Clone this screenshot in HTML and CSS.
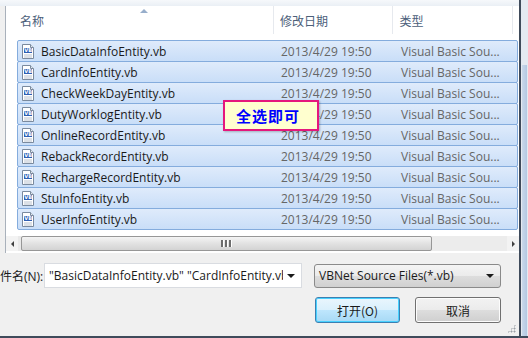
FILE: index.html
```html
<!DOCTYPE html>
<html lang="zh-CN">
<head>
    <meta charset="UTF-8">
    <title>打开</title>
    <link rel="stylesheet" href="styles.css">
</head>
<body>
    <div class="dialog">
        <div class="topstrip"></div>
        <div class="listpane">
            <div class="header">
                <div class="col col-name">名称</div>
                <div class="col col-date">修改日期</div>
                <div class="col col-type">类型</div>
                <div class="col col-rest"></div>
                <span class="sort-arrow"></span>
            </div>

            <div class="rows" id="rows"></div>

            <div class="hscroll">
                <div class="arrow-btn"><span class="tri-left"></span></div>
                <div class="thumb"><span class="grip"><i></i><i></i><i></i></span></div>
                <div class="track"></div>
                <div class="arrow-btn"><span class="tri-right"></span></div>
            </div>

            <div class="tooltip">全选即可</div>
        </div>

        <div class="bottom">
            <div class="line">
                <span class="label">文件名(N):</span>
                <div class="filename">
                    <span class="filename-text">"BasicDataInfoEntity.vb" "CardInfoEntity.vb"</span>
                    <span class="drop"></span>
                </div>
                <div class="combo">
                    <span>VBNet Source Files(*.vb)</span>
                    <span class="drop"></span>
                </div>
            </div>
            <div class="line buttons">
                <button class="btn btn-default">打开(O)</button>
                <button class="btn">取消</button>
            </div>
            <div class="grip-corner"></div>
        </div>
    </div>
    <div class="side"><div class="vthumb"></div></div>

    <script>
        const files = [
            'BasicDataInfoEntity.vb',
            'CardInfoEntity.vb',
            'CheckWeekDayEntity.vb',
            'DutyWorklogEntity.vb',
            'OnlineRecordEntity.vb',
            'RebackRecordEntity.vb',
            'RechargeRecordEntity.vb',
            'StuInfoEntity.vb',
            'UserInfoEntity.vb'
        ];

        const icon = `<svg class="icon" width="12" height="15" viewBox="0 0 12 15">
            <path d="M0.5 0.5 H8.5 L11.5 3.5 V14.5 H0.5 Z" fill="#fff" stroke="#7a8a9e"/>
            <path d="M8.5 0.5 V3.5 H11.5" fill="#e4e9ef" stroke="#7a8a9e"/>
            <rect x="2" y="4" width="8" height="5" fill="#2f5fb3"/>
            <text x="2.3" y="8.4" font-size="5" font-family="DejaVu Sans" font-weight="bold" fill="#fff">VB</text>
            <line x1="2" y1="11" x2="10" y2="11" stroke="#b8c2cf"/>
            <line x1="2" y1="13" x2="10" y2="13" stroke="#b8c2cf"/>
        </svg>`;

        const rows = document.getElementById('rows');
        files.forEach(name => {
            let row = document.createElement('div');
            row.className = 'row';
            row.innerHTML = `<div class="cell cell-name">${icon}<span>${name}</span></div>` +
                `<div class="cell cell-date">2013/4/29 19:50</div>` +
                `<div class="cell cell-type">Visual Basic Sou...</div>`;
            rows.appendChild(row);
        });
    </script>
</body>
</html>
```

FILE: styles.css
```css
body {
    margin: 0;
    width: 528px;
    height: 338px;
    overflow: hidden;
    display: flex;
    background: #f0f0f0;
    font-family: "Open Sans", "Noto Sans CJK SC", sans-serif;
    font-size: 12px;
}
.dialog {
    width: 519px;
    height: 336px;
    border-right: 2px solid #3f4b5b;
    border-bottom: 2px solid #3f4b5b;
    background: #f0f0f0;
    display: flex;
    flex-direction: column;
}
.side {
    flex: 1;
    display: flex;
    flex-direction: column;
    background: #e4eaf1;
    border-bottom: 2px solid #3f4b5b;
}
.vthumb {
    margin-top: 65px;
    flex: 1;
    margin-left: 1px;
    margin-right: 1px;
    background: linear-gradient(to right, #c9d8ea, #b3c8e2);
}
.topstrip {
    height: 6px;
    background: linear-gradient(#f6f8fb, #eaeff5);
}
.listpane {
    position: relative;
    height: 247px;
    margin-left: 5px;
    border-left: 1px solid #a9b1bb;
    background: #fff;
    display: flex;
    flex-direction: column;
}
.header {
    position: relative;
    height: 28px;
    display: flex;
    color: #4c607a;
    font-family: "Noto Sans CJK SC", sans-serif;
}
.col {
    display: flex;
    align-items: center;
    padding-left: 6px;
    padding-top: 1px;
    border-right: 1px solid #e6e9ee;
    box-sizing: border-box;
}
.col-name { width: 269px; padding-left: 14px; }
.col-date { width: 120px; }
.col-type { width: 120px; }
.col-rest { flex: 1; border-right: none; }
.sort-arrow {
    position: absolute;
    left: 134px;
    top: 3px;
    border-left: 4px solid transparent;
    border-right: 4px solid transparent;
    border-bottom: 4px solid #97aecb;
}
.rows {
    padding: 6px 1px 0 11px;
    display: flex;
    flex-direction: column;
}
.row {
    height: 22px;
    box-sizing: border-box;
    border: 1px solid #84acdd;
    border-radius: 2px;
    background: linear-gradient(#dfebfb, #c9def8);
    display: flex;
    align-items: center;
}
.row + .row {
    margin-top: -1px;
}
.cell {
    white-space: nowrap;
    color: #666;
}
.cell-name {
    width: 253px;
    display: flex;
    align-items: center;
    gap: 7px;
    padding-left: 4px;
    color: #1a1a1a;
}
.cell-date {
    width: 114px;
    padding-left: 6px;
}
.cell-type {
    padding-left: 6px;
}
.icon {
    display: block;
}
.hscroll {
    margin-top: 6px;
    height: 15px;
    display: flex;
    background: #e9e9e9;
}
.arrow-btn {
    width: 12px;
    display: flex;
    align-items: center;
    justify-content: center;
    background: #f3f3f3;
}
.tri-left {
    border-top: 3px solid transparent;
    border-bottom: 3px solid transparent;
    border-right: 3px solid #404040;
}
.tri-right {
    border-top: 3px solid transparent;
    border-bottom: 3px solid transparent;
    border-left: 3px solid #404040;
}
.thumb {
    width: 411px;
    margin-left: 3px;
    box-sizing: border-box;
    border: 1px solid #979797;
    border-radius: 2px;
    background: linear-gradient(#f4f4f4, #e2e2e2 50%, #d3d3d3);
    display: flex;
    align-items: center;
    justify-content: center;
}
.grip {
    display: flex;
    gap: 1px;
}
.grip i {
    width: 2px;
    height: 7px;
    background: #6d6d6d;
    border-right: 1px solid #fff;
}
.track {
    flex: 1;
    background: #ececec;
}
.tooltip {
    position: absolute;
    left: 217px;
    top: 94px;
    width: 96px;
    height: 31px;
    box-sizing: border-box;
    border: 2px solid #e5177d;
    background: #ffffcf;
    box-shadow: 1px 1px 2px rgba(0, 0, 0, 0.25);
    padding-left: 11px;
    display: flex;
    align-items: center;
    color: #0000ff;
    font-family: "Noto Sans CJK SC", sans-serif;
    font-weight: bold;
    font-size: 15px;
    letter-spacing: 1px;
}
.bottom {
    flex: 1;
    position: relative;
    display: flex;
    flex-direction: column;
}
.line {
    display: flex;
    align-items: center;
    margin-top: 10px;
}
.label {
    margin-left: -12px;
    width: 56px;
    color: #1a1a1a;
}
.filename {
    width: 258px;
    height: 25px;
    box-sizing: border-box;
    border: 1px solid #d9dce1;
    background: #fff;
    display: flex;
    align-items: center;
    padding-left: 4px;
    overflow: hidden;
}
.filename-text {
    width: 234px;
    overflow: hidden;
    white-space: nowrap;
    color: #1a1a1a;
}
.drop {
    margin-left: auto;
    margin-right: 6px;
    border-left: 4px solid transparent;
    border-right: 4px solid transparent;
    border-top: 4px solid #1a1a1a;
}
.combo {
    margin-left: 12px;
    width: 187px;
    height: 24px;
    box-sizing: border-box;
    border: 1px solid #8a8a8a;
    border-radius: 3px;
    background: linear-gradient(#f4f4f4, #ebebeb 50%, #dddddd 51%, #d0d0d0);
    display: flex;
    align-items: center;
    padding-left: 4px;
    color: #1a1a1a;
}
.buttons {
    margin-top: 9px;
    margin-left: 315px;
    gap: 15px;
}
.btn {
    width: 86px;
    height: 26px;
    border: 1px solid #707070;
    border-radius: 3px;
    background: linear-gradient(#f2f2f2, #ebebeb 50%, #dddddd 51%, #cfcfcf);
    font-family: "Noto Sans CJK SC", sans-serif;
    font-size: 12px;
    color: #1a1a1a;
    box-shadow: inset 0 0 0 1px #fcfcfc;
    padding: 0;
}
.btn-default {
    width: 85px;
    border-color: #3c7fb1;
    box-shadow: inset 0 0 0 1px #48d1ff;
    background: linear-gradient(#eaf6fd, #d9f0fc 50%, #bee6fd 51%, #a7d9f5);
}
.grip-corner {
    position: absolute;
    right: 3px;
    bottom: 3px;
    width: 9px;
    height: 9px;
    background: radial-gradient(circle, #9aa0a6 0.8px, transparent 1.2px) 0 0 / 3px 3px;
    clip-path: polygon(100% 0, 100% 100%, 0 100%);
}
```
